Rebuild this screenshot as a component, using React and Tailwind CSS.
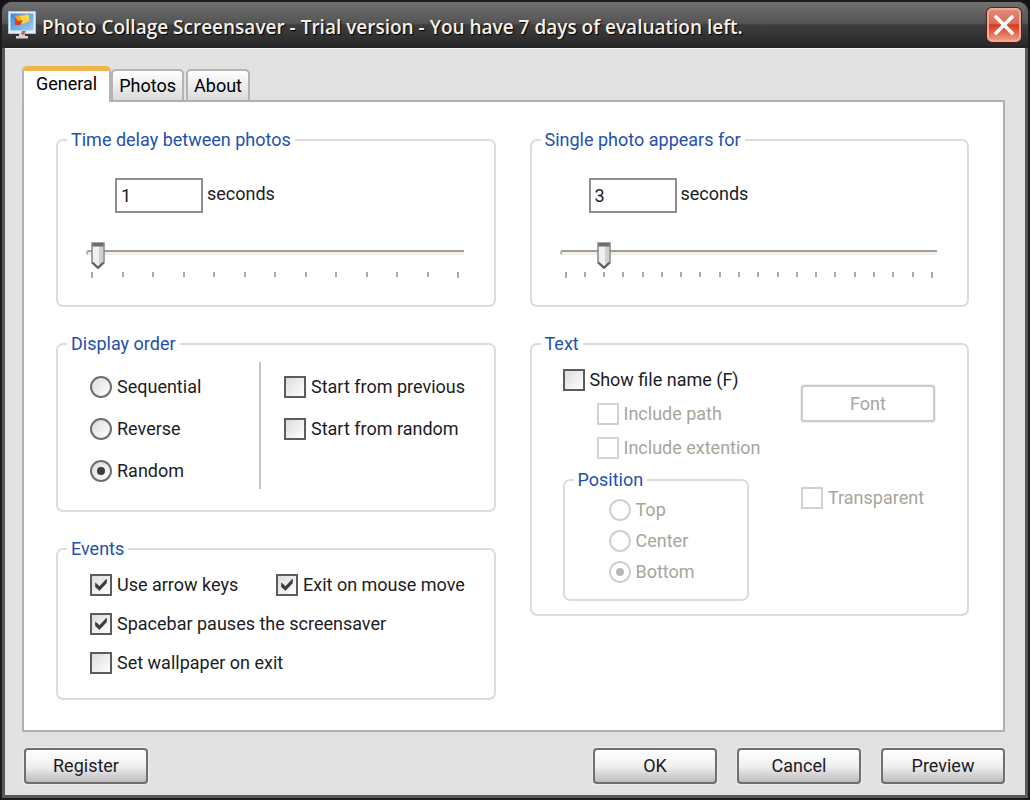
import React, { useState } from 'react';

const Group = ({ title, className = '', children }) => (
  <fieldset className={`min-w-0 rounded-[7px] border-2 border-[#dcdcdc] ${className}`}>
    <legend className="ml-[9px] px-1 text-[18px] leading-6 text-[#2350ae]">{title}</legend>
    {children}
  </fieldset>
);

const Check = ({ label, defaultChecked, disabled }) => (
  <label className={`flex h-[22px] items-center gap-[5px] whitespace-nowrap ${disabled ? 'text-[#a6a69a]' : 'text-[#1c1c24]'}`}>
    <span className="grid h-[22px] w-[22px] shrink-0">
      <input
        type="checkbox"
        defaultChecked={defaultChecked}
        disabled={disabled}
        className="peer col-start-1 row-start-1 h-[22px] w-[22px] appearance-none border-2 border-[#5c5c5c] bg-linear-to-br from-[#dcdcdc] to-white disabled:border-[#d2d2d2] disabled:bg-none"
      />
      <svg viewBox="0 0 22 22" className="pointer-events-none invisible col-start-1 row-start-1 h-[22px] w-[22px] peer-checked:visible">
        <path d="M5.5 9 9.5 12.5 16.5 5V9L9.5 16.5 5.5 13Z" fill="#3c3c3c" stroke="#3c3c3c" strokeWidth="0.6" />
      </svg>
    </span>
    {label}
  </label>
);

const Radio = ({ label, name, defaultChecked, disabled }) => (
  <label className={`flex h-[22px] items-center gap-[5px] whitespace-nowrap ${disabled ? 'text-[#a6a69a]' : 'text-[#1c1c24]'}`}>
    <span className="grid h-[22px] w-[22px] shrink-0 place-items-center">
      <input
        type="radio"
        name={name}
        defaultChecked={defaultChecked}
        disabled={disabled}
        className="peer col-start-1 row-start-1 h-[22px] w-[22px] appearance-none rounded-full border-2 border-[#6e6e6e] bg-linear-to-br from-[#dcdcdc] to-white disabled:border-[#d0d0d0] disabled:bg-none"
      />
      <span className="pointer-events-none invisible col-start-1 row-start-1 h-2 w-2 rounded-full bg-[#3c3c3c] peer-checked:visible peer-disabled:bg-[#b8b8b8]" />
    </span>
    {label}
  </label>
);

const Slider = ({ label, min, max, ticks, value, onChange }) => {
  const percent = ((value - min) / (max - min)) * 100;
  return (
    <div className="mt-7 pr-[30px] pl-7">
      <div className="relative h-7">
        <div className="absolute inset-x-0 top-[9px] h-[5px] rounded-l-[3px] border-t-2 border-l-2 border-t-[#a09e98] border-l-[#b4b2ac] bg-[#f3efe8]" />
        <div className="absolute inset-y-0 right-[5px] left-[6px]">
          <svg
            viewBox="0 0 14 28"
            className="absolute top-0 h-7 w-[14px] -translate-x-1/2"
            style={{ left: `${percent}%` }}
          >
            <path d="M1 2H13V22L7 27.5 1 22Z" fill="#f0f0f0" stroke="#858585" strokeWidth="1.5" />
            <path d="M8 5H12V21.5L8 25Z" fill="#cfcfcf" />
            <path d="M1.5 2H12.5V5.5H1.5Z" fill="#6c6c6c" />
            <path d="M1.5 21.5 7 26.5 12.5 21.5" fill="none" stroke="#5f5f5f" strokeWidth="1.8" />
          </svg>
        </div>
        <input
          type="range"
          aria-label={label}
          min={min}
          max={max}
          value={value}
          onChange={(e) => onChange(Number(e.target.value))}
          className="absolute inset-0 h-7 w-full cursor-default opacity-0"
        />
      </div>
      <div className="mt-[3px] mr-1 ml-[5px] flex h-[6px] justify-between">
        {Array.from({ length: ticks }, (_, i) => (
          <span key={i} className="h-[5px] w-[2px] bg-[#aaa9a4] first:h-[6px] last:h-[6px]" />
        ))}
      </div>
    </div>
  );
};

const Delay = ({ title, initial, slider }) => {
  const [seconds, setSeconds] = useState(initial);
  return (
    <Group title={title} className="pb-[27px]">
      <label className="flex items-center gap-1 pt-[26px] pl-[57px] text-[#1c1c24]">
        <input
          type="text"
          value={seconds}
          onChange={(e) => setSeconds(e.target.value)}
          className="h-[35px] w-[88px] border-2 border-[#8e8e8e] bg-white px-1 outline-none"
        />
        <span className="pb-1">seconds</span>
      </label>
      <Slider label={title} {...slider} value={Number(seconds) || 0} onChange={setSeconds} />
    </Group>
  );
};

const DialogButton = ({ children }) => (
  <button
    type="button"
    className="h-9 w-[124px] rounded-[4px] border-2 border-[#6f6f6f] bg-linear-to-b from-white via-[#f0f0f0] to-[#bdbdbd] text-[#1c1c24] shadow-[0_0_0_1px_#ececec]"
  >
    {children}
  </button>
);

const tabs = ['General', 'Photos', 'About'];

const App = () => {
  const [activeTab, setActiveTab] = useState('General');

  return (
    <div className="min-h-screen bg-[#121212] font-[Roboto,'Liberation_Sans',sans-serif] text-[18px] leading-6">
      <div className="flex min-h-screen flex-col rounded-t-[12px] border-2 border-[#1c1c1c] bg-[#595959]">
        <header className="flex h-[46px] items-center gap-[6px] rounded-t-[10px] bg-[linear-gradient(#707070,#545454_46%,#3e3e3e_50%,#262626)] pr-[7px] pl-[6px]">
          <svg viewBox="0 0 28 28" className="h-7 w-7 shrink-0">
            <defs>
              <linearGradient id="screen" x1="0" y1="0" x2="1" y2="1">
                <stop offset="0" stopColor="#3f86d8" />
                <stop offset="1" stopColor="#9bd0f8" />
              </linearGradient>
            </defs>
            <path d="M0.5 0.5H27.5V22.5H0.5Z" fill="#e3eefb" stroke="#a9c4e6" />
            <path d="M2.5 2.5H25.5V19.5H2.5Z" fill="url(#screen)" />
            <path d="M7 5 20 3 21 11 9 14Z" fill="#f5a623" />
            <path d="M12 5 21 4V10L14 13Z" fill="#ffd84a" />
            <path d="M7 6 10 10 15 9 12 14 7 14Z" fill="#d8401c" />
            <path d="M11 22.5H17V25H20V27.5H8V25H11Z" fill="#d4d4d4" />
            <path d="M14 20 18 20 16 24 13 23Z" fill="#b8685c" />
          </svg>
          <h1 className="flex-1 truncate pt-1 font-['Open_Sans','Noto_Sans',sans-serif] text-[19px] font-semibold text-[#f4f0e8] [text-shadow:1px_1px_1px_#000]">
            Photo Collage Screensaver - Trial version - You have 7 days of evaluation left.
          </h1>
          <button
            type="button"
            aria-label="Close"
            className="flex h-[34px] w-[34px] items-center justify-center rounded-[5px] border-2 border-[#f0a898] bg-[linear-gradient(#e08a78,#dc6a54_45%,#d8381c_50%,#ee9a80)] shadow-[0_0_0_1px_#5a2018]"
          >
            <svg viewBox="0 0 20 20" className="h-5 w-5">
              <path d="M2 2 18 18M18 2 2 18" stroke="#fff" strokeWidth="3.6" strokeLinecap="round" />
            </svg>
          </button>
        </header>

        <main className="mx-[3px] mb-[3px] flex flex-1 flex-col border-t border-[#f4f4f4] bg-[#e2e2e2] pt-[17px] pr-5 pb-[11px] pl-[17px]">
          <div role="tablist" className="flex items-end">
            {tabs.map((tab) => (
              <button
                key={tab}
                type="button"
                role="tab"
                aria-selected={activeTab === tab}
                onClick={() => setActiveTab(tab)}
                className={
                  activeTab === tab
                    ? 'relative -mb-[2px] h-9 rounded-t-[5px] border-x-2 border-t-[5px] border-x-[#b4b4b4] border-t-[#efb44c] bg-white px-3 pb-[5px]'
                    : 'mr-[2px] h-[31px] rounded-t-[5px] border-2 border-b-0 border-[#b4b4b4] bg-linear-to-b from-white to-[#dadada] px-[6px]'
                }
              >
                {tab}
              </button>
            ))}
          </div>

          <div role="tabpanel" className="grid flex-1 grid-cols-2 gap-x-[34px] border-2 border-[#b0b0b0] bg-white pt-[26px] pr-[34px] pb-7 pl-8">
            <div className="flex flex-col gap-[25px]">
              <Delay title="Time delay between photos" initial={1} slider={{ min: 0, max: 60, ticks: 13 }} />

              <Group title="Display order" className="pt-[6px] pb-[21px]">
                <div className="flex">
                  <div className="flex w-[203px] flex-col gap-5 border-r-2 border-[#c4c4c4] pt-[14px] pb-[7px] pl-8">
                    <Radio name="order" label="Sequential" />
                    <Radio name="order" label="Reverse" />
                    <Radio name="order" label="Random" defaultChecked />
                  </div>
                  <div className="flex flex-col gap-5 pt-[14px] pl-[23px]">
                    <Check label="Start from previous" />
                    <Check label="Start from random" />
                  </div>
                </div>
              </Group>

              <Group title="Events" className="pb-6">
                <div className="flex flex-col gap-[17px] pt-[13px] pl-8">
                  <div className="flex">
                    <div className="w-[186px]">
                      <Check label="Use arrow keys" defaultChecked />
                    </div>
                    <Check label="Exit on mouse move" defaultChecked />
                  </div>
                  <Check label="Spacebar pauses the screensaver" defaultChecked />
                  <Check label="Set wallpaper on exit" />
                </div>
              </Group>
            </div>

            <div className="flex flex-col gap-[25px]">
              <Delay title="Single photo appears for" initial={3} slider={{ min: 1, max: 20, ticks: 20 }} />

              <Group title="Text" className="pb-[13px]">
                <div className="flex justify-between pr-8 pl-[31px]">
                  <div className="pt-[13px]">
                    <div className="flex flex-col gap-3">
                      <Check label="Show file name (F)" />
                      <div className="flex flex-col gap-3 pl-[34px]">
                        <Check label="Include path" disabled />
                        <Check label="Include extention" disabled />
                      </div>
                    </div>
                    <Group title="Position" className="mt-[9px] w-[186px] pb-4">
                      <div className="flex flex-col gap-[9px] pt-[7px] pl-11">
                        <Radio name="position" label="Top" disabled />
                        <Radio name="position" label="Center" disabled />
                        <Radio name="position" label="Bottom" defaultChecked disabled />
                      </div>
                    </Group>
                  </div>
                  <div className="flex w-[134px] flex-col gap-[65px] pt-[29px]">
                    <button
                      type="button"
                      disabled
                      className="h-[37px] rounded-[3px] border-2 border-[#cccccc] bg-white text-[#a6a69a] shadow-[0_0_0_1px_#f0f0f0]"
                    >
                      Font
                    </button>
                    <Check label="Transparent" disabled />
                  </div>
                </div>
              </Group>
            </div>
          </div>

          <footer className="mt-4 flex gap-5 pl-[2px]">
            <div className="flex-1">
              <DialogButton>Register</DialogButton>
            </div>
            <DialogButton>OK</DialogButton>
            <DialogButton>Cancel</DialogButton>
            <DialogButton>Preview</DialogButton>
          </footer>
        </main>
      </div>
    </div>
  );
};

export default App;
